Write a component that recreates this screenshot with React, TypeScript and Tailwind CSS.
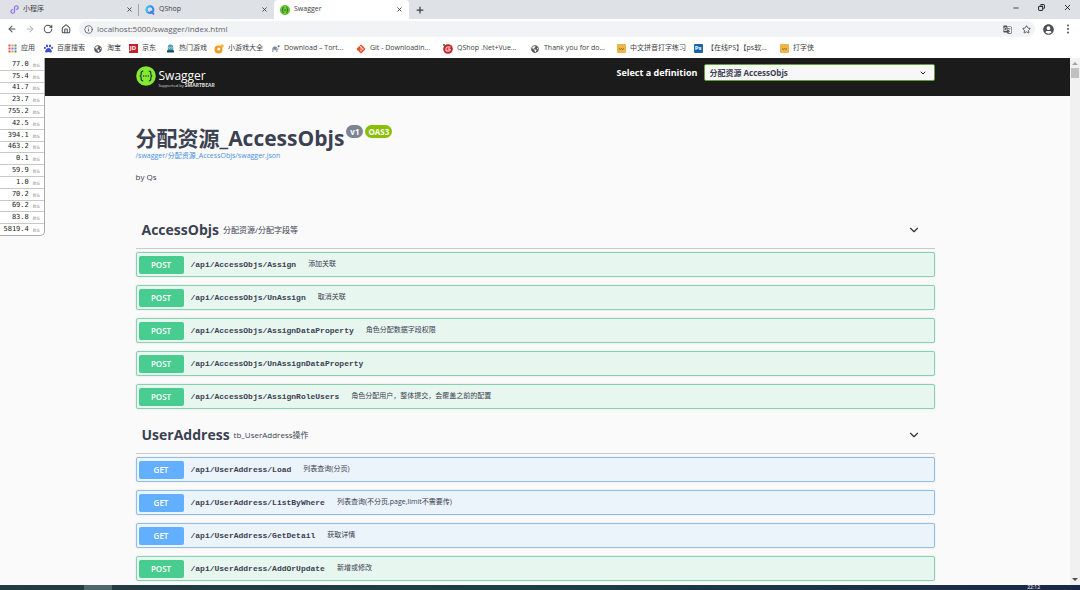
import React, { useState } from "react";
import {
  ArrowLeft,
  ArrowRight,
  ChevronDown,
  Copy,
  House,
  Info,
  Minus,
  Plus,
  RotateCw,
  Star,
  X,
} from "lucide-react";
import { FaGitAlt, FaGlobeAmericas, FaPaw, FaUserCircle } from "react-icons/fa";
import { MdGTranslate } from "react-icons/md";

type Method = "GET" | "POST";

type Operation = {
  method: Method;
  path: string;
  summary?: string;
};

type TagType = {
  name: string;
  description: string;
  operations: Operation[];
};

type BookmarkType = {
  title: string;
  width: string;
  icon: React.ReactNode;
};

const tags: TagType[] = [
  {
    name: "AccessObjs",
    description: "分配资源/分配字段等",
    operations: [
      { method: "POST", path: "/api/AccessObjs/Assign", summary: "添加关联" },
      { method: "POST", path: "/api/AccessObjs/UnAssign", summary: "取消关联" },
      {
        method: "POST",
        path: "/api/AccessObjs/AssignDataProperty",
        summary: "角色分配数据字段权限",
      },
      { method: "POST", path: "/api/AccessObjs/UnAssignDataProperty" },
      {
        method: "POST",
        path: "/api/AccessObjs/AssignRoleUsers",
        summary: "角色分配用户，整体提交，会覆盖之前的配置",
      },
    ],
  },
  {
    name: "UserAddress",
    description: "tb_UserAddress操作",
    operations: [
      { method: "GET", path: "/api/UserAddress/Load", summary: "列表查询(分页)" },
      {
        method: "GET",
        path: "/api/UserAddress/ListByWhere",
        summary: "列表查询(不分页,page,limit不需要传)",
      },
      { method: "GET", path: "/api/UserAddress/GetDetail", summary: "获取详情" },
      {
        method: "POST",
        path: "/api/UserAddress/AddOrUpdate",
        summary: "新增或修改",
      },
    ],
  },
];

const timings = [
  "77.0",
  "75.4",
  "41.7",
  "23.7",
  "755.2",
  "42.5",
  "394.1",
  "463.2",
  "0.1",
  "59.9",
  "1.0",
  "70.2",
  "69.2",
  "83.8",
  "5819.4",
];

const AppsIcon = () => (
  <svg viewBox="0 0 9 9" className="size-[9px]">
    {[0, 1, 2].map((row) =>
      ["#e0554a", "#d9a13b", "#5a8f5c"].map((color, col) => (
        <rect
          key={`${row}-${col}`}
          x={col * 3 + 0.5}
          y={row * 3 + 0.5}
          width="2"
          height="2"
          fill={row === 1 ? ["#d9534f", "#8a6fc0", "#4285f4"][col] : color}
        />
      ))
    )}
  </svg>
);

const JdIcon = () => (
  <span className="flex size-[9px] items-center justify-center bg-[#c8202b] text-[6px] font-bold text-white">
    JD
  </span>
);

const GameIcon = () => (
  <svg viewBox="0 0 10 10" className="size-[9px]">
    <path d="M2 4a3 3.500 0 0 1 6 0v4H2z" fill="#3f9fb4" />
    <rect x="1" y="7" width="8" height="2.500" rx="1" fill="#1f4e5c" />
    <circle cx="3.800" cy="4" r="1" fill="#fff" />
    <circle cx="6.200" cy="4" r="1" fill="#fff" />
    <circle cx="3.900" cy="4" r=".5" fill="#123" />
    <circle cx="6.100" cy="4" r=".5" fill="#123" />
  </svg>
);

const MiniGameIcon = () => (
  <svg viewBox="0 0 10 10" className="size-[10px]">
    <circle cx="4.500" cy="5.500" r="4" fill="#f39a1e" />
    <circle cx="4.800" cy="5" r="1.600" fill="#fff" />
    <circle cx="8" cy="2" r="1.700" fill="#f6b03c" />
  </svg>
);

const TortoiseIcon = () => (
  <svg viewBox="0 0 10 10" className="size-[9px]">
    <path d="M1 7c0-6 6-6 6.500-1L9 2.500 8 7z" fill="#a3a9b8" />
    <path d="M2 7v2M6.500 7v2M3 5l3-1M3.500 3.500l2 3" stroke="#626a80" strokeWidth=".9" />
    <circle cx="8.500" cy="2.500" r="1.200" fill="#6b7286" />
  </svg>
);

const GiteeIcon = () => (
  <svg viewBox="0 0 10 10" className="size-[10px]">
    <circle cx="5" cy="5" r="4.800" fill="#c71d23" />
    <path
      d="M7.500 3H4.200a1.200 1.200 0 0 0-1.200 1.200V7h3.200a1 1 0 0 0 1-1V5H4.700"
      fill="none"
      stroke="#fff"
      strokeWidth="1"
    />
    <rect x="0" y="0" width="2" height="2" fill="#4a9a4a" />
  </svg>
);

const TypingIcon = () => (
  <svg viewBox="0 0 9 9" className="size-[9px]">
    <rect width="9" height="9" rx="1" fill="#edb64a" />
    <path d="M2 4.500l1.300 1 1.200-1 1.200 1 1.300-1" fill="none" stroke="#8c5a14" strokeWidth=".9" />
  </svg>
);

const PsIcon = () => (
  <span className="flex size-[9px] items-center justify-center rounded-[1px] bg-[#1765a8] text-[6px] font-bold text-white">
    Ps
  </span>
);

const bookmarks: BookmarkType[] = [
  { title: "应用", width: "w-9", icon: <AppsIcon /> },
  { title: "百度搜索", width: "w-[50px]", icon: <FaPaw size={9} color="#3a4bd8" /> },
  { title: "淘宝", width: "w-[35px]", icon: <FaGlobeAmericas size={8} color="#55585c" /> },
  { title: "京东", width: "w-[37px]", icon: <JdIcon /> },
  { title: "热门游戏", width: "w-[49px]", icon: <GameIcon /> },
  { title: "小游戏大全", width: "w-14", icon: <MiniGameIcon /> },
  { title: "Download – Tort...", width: "w-[86px]", icon: <TortoiseIcon /> },
  { title: "Git - Downloadin...", width: "w-[87px]", icon: <FaGitAlt size={10} color="#e8502f" /> },
  { title: "QShop .Net+Vue...", width: "w-[87px]", icon: <GiteeIcon /> },
  { title: "Thank you for do...", width: "w-[86px]", icon: <FaGlobeAmericas size={8} color="#55585c" /> },
  { title: "中文拼音打字练习", width: "w-[77px]", icon: <TypingIcon /> },
  { title: "【在线PS】【ps软...", width: "w-[86px]", icon: <PsIcon /> },
  { title: "打字侠", width: "w-12", icon: <TypingIcon /> },
];

const MiniAppIcon = () => (
  <svg viewBox="0 0 10 10" className="size-[9px]" fill="none" strokeWidth="1.300" strokeLinecap="round">
    <path d="M5 7.200V2.800a2 2 0 1 1 2.400 2" stroke="#7a6cf0" />
    <path d="M5 2.800v4.400a2 2 0 1 1-2.400-2" stroke="#9a6ff0" />
  </svg>
);

const QShopIcon = () => (
  <svg viewBox="0 0 10 10" className="size-[10px]">
    <circle cx="5" cy="4.700" r="3.400" fill="none" stroke="#2f8ff0" strokeWidth="2" />
    <path d="M5 1.300a3.400 3.400 0 0 0-2.500 5.700" fill="none" stroke="#43c3e8" strokeWidth="2" />
    <path d="M5.500 6l3.500 3.500" stroke="#5a6ff0" strokeWidth="1.800" />
  </svg>
);

const SwaggerMark = ({ className }: { className: string }) => (
  <svg viewBox="0 0 20 20" className={className}>
    <circle cx="10" cy="10" r="9.800" fill="#85ea2d" />
    <path
      d="M7.200 5.200c-1.600 0-2 .6-2 1.800v1.300c0 1-.4 1.500-1.400 1.700 1 .2 1.400.7 1.400 1.700V13c0 1.200.4 1.800 2 1.800M12.800 5.200c1.600 0 2 .6 2 1.800v1.300c0 1 .4 1.500 1.400 1.700-1 .2-1.400.7-1.400 1.700V13c0 1.200-.4 1.800-2 1.800"
      fill="none"
      stroke="#173647"
      strokeWidth="1.200"
    />
    <circle cx="7.600" cy="10" r=".8" fill="#173647" />
    <circle cx="10" cy="10" r=".8" fill="#173647" />
    <circle cx="12.400" cy="10" r=".8" fill="#173647" />
  </svg>
);

// the small tab version, too tiny for the dots
const SwaggerFavicon = () => (
  <svg viewBox="0 0 20 20" className="size-[10px]">
    <circle cx="10" cy="10" r="9.500" fill="#6fd02c" stroke="#3f9a2a" strokeWidth="1" />
    <path
      d="M7.500 4.500c-2 0-2 1-2 2.500S5 9.700 3.500 10c1.500.3 2 1.500 2 3s0 2.500 2 2.500M12.500 4.500c2 0 2 1 2 2.500s.5 2.700 2 3c-1.500.3-2 1.500-2 3s0 2.500-2 2.500M7.500 10h5"
      fill="none"
      stroke="#1f5a2c"
      strokeWidth="1.800"
    />
  </svg>
);

const browserTabs = [
  { title: "小程序", icon: <MiniAppIcon /> },
  { title: "QShop", icon: <QShopIcon /> },
  { title: "Swagger", icon: <SwaggerFavicon /> },
];

function BrowserChrome() {
  const [activeTab, setActiveTab] = useState<number>(2);
  const [address, setAddress] = useState("localhost:5000/swagger/index.html");

  return (
    <header className="shrink-0 text-[#3c4043]">
      <div className="flex h-[19px] items-center bg-[#dee1e6] pl-1">
        {browserTabs.map((tab, index) => (
          <div
            key={tab.title}
            className={`flex h-full w-[135px] items-center pr-1.5 pl-1.5 ${
              activeTab === index ? "rounded-t-[4px] bg-white" : ""
            }`}
          >
            <button
              className="flex flex-1 items-center gap-1 text-[7px]"
              onClick={() => setActiveTab(index)}
            >
              {tab.icon}
              {tab.title}
            </button>
            <button aria-label={`关闭 ${tab.title}`}>
              <X size={7} strokeWidth={3} />
            </button>
            {index === 0 && <span className="-mr-1.5 ml-[5px] h-3 w-px bg-[#a3a6ab]" />}
          </div>
        ))}
        <button className="ml-1.5" aria-label="新标签页">
          <Plus size={10} strokeWidth={3} />
        </button>
        <div className="ml-auto flex items-center gap-[18px] pr-2 pb-1 text-black">
          <button aria-label="最小化">
            <Minus size={8} strokeWidth={2} />
          </button>
          <button aria-label="还原">
            <Copy size={7} strokeWidth={3} className="-scale-x-100" />
          </button>
          <button aria-label="关闭">
            <X size={9} strokeWidth={2} />
          </button>
        </div>
      </div>

      <div className="flex h-5 items-center bg-white pr-2 pl-[7px] text-[#4d5155]">
        <div className="flex items-center gap-2">
          <button aria-label="后退">
            <ArrowLeft size={10} strokeWidth={2.5} />
          </button>
          <button aria-label="前进" className="text-[#b5b8bb]">
            <ArrowRight size={10} strokeWidth={2.5} />
          </button>
          <button aria-label="重新加载">
            <RotateCw size={10} strokeWidth={2.5} />
          </button>
          <button aria-label="主页">
            <House size={10} strokeWidth={2.5} />
          </button>
        </div>
        <div className="ml-2 flex h-4 flex-1 items-center gap-1 rounded-full bg-[#f1f3f4] pr-1 pl-[5px]">
          <Info size={9} strokeWidth={2} />
          <input
            aria-label="地址栏"
            className="min-w-0 flex-1 bg-transparent text-[8px] text-[#5f6368] outline-none"
            value={address}
            onChange={(event) => setAddress(event.target.value)}
          />
          <button aria-label="翻译" className="mr-1.5">
            <MdGTranslate size={9} />
          </button>
          <button aria-label="收藏">
            <Star size={9} strokeWidth={2.5} />
          </button>
        </div>
        <button aria-label="用户" className="ml-2">
          <FaUserCircle size={11} />
        </button>
        <button aria-label="菜单" className="ml-2.5">
          <svg viewBox="0 0 8 10" className="h-2.5 w-2 fill-[#4d5155]">
            <circle cx="4" cy="1.500" r="1" />
            <circle cx="4" cy="5" r="1" />
            <circle cx="4" cy="8.500" r="1" />
          </svg>
        </button>
      </div>

      <nav className="flex h-[19px] items-center overflow-hidden bg-white pl-[7px]">
        {bookmarks.map((bookmark) => (
          <a
            key={bookmark.title}
            href="#"
            className={`flex shrink-0 items-center gap-1 text-[7px] whitespace-nowrap ${bookmark.width}`}
          >
            <span className="flex w-2.5 shrink-0 justify-center">{bookmark.icon}</span>
            {bookmark.title}
          </a>
        ))}
      </nav>
    </header>
  );
}

function TopBar() {
  return (
    <div className="h-[38px] bg-[#1b1b1b]">
      <div className="mx-auto flex max-w-[799px] items-start justify-between pt-1.5">
        <a href="#" className="flex items-start gap-[3px] pt-0.5 text-white">
          <SwaggerMark className="size-5" />
          <span className="flex flex-col pt-1">
            <span className="text-[12px] leading-3">Swagger</span>
            <span className="text-[4px] leading-[7px] whitespace-nowrap text-[#dddddd]">
              Supported by <b className="text-[5px]">SMARTBEAR</b>
            </span>
          </span>
        </a>
        <div className="flex items-center gap-1.5">
          <label htmlFor="definition" className="text-[9px] font-bold text-white">
            Select a definition
          </label>
          <div className="relative">
            <select
              id="definition"
              className="block h-[17px] w-[231px] appearance-none rounded-[2px] border border-[#62a03f] bg-[#f7f7f7] px-[5px] text-[8px] font-bold text-[#3b4151] outline-none"
            >
              <option>分配资源 AccessObjs</option>
              <option>UserAddress</option>
            </select>
            <ChevronDown
              size={8}
              strokeWidth={3}
              className="pointer-events-none absolute top-[5px] right-2 text-[#222222]"
            />
          </div>
        </div>
      </div>
    </div>
  );
}

function OperationRow({ operation }: { operation: Operation }) {
  const isGet = operation.method === "GET";

  return (
    <button
      className={`flex h-[25px] w-full items-center rounded-[2px] border px-0.5 text-left shadow-[0_0_2px_rgba(0,0,0,0.12)] ${
        isGet ? "border-[#8fbfe6] bg-[#ebf3fb]" : "border-[#84d3ae] bg-[#e8f6f0]"
      }`}
    >
      <span
        className={`flex h-[18px] w-[45px] items-center justify-center rounded-[2px] text-[8px] font-semibold text-white ${
          isGet ? "bg-[#61affe]" : "bg-[#49cc90]"
        }`}
      >
        {operation.method}
      </span>
      <span className="ml-[7px] font-['Liberation_Mono',monospace] text-[8px] font-bold text-[#3b4151]">
        {operation.path}
      </span>
      <span className="ml-3 text-[7px] text-[#3b4151]">{operation.summary}</span>
    </button>
  );
}

function TagSection({ tag }: { tag: TagType }) {
  const [open, setOpen] = useState(true);

  return (
    <section className="mb-[7px]">
      <button
        className="mb-[3px] flex h-[38px] w-full items-center border-b border-[#3b4151]/25 pr-3.5 pl-1.5 text-[#3b4151]"
        onClick={() => setOpen(!open)}
      >
        <h3 className="text-[14px] font-bold">{tag.name}</h3>
        <small className="ml-1 text-[8px]">{tag.description}</small>
        <ChevronDown size={14} strokeWidth={2} className="ml-auto text-[#333333]" />
      </button>
      {open && (
        <div className="flex flex-col gap-2">
          {tag.operations.map((operation) => (
            <OperationRow key={operation.path} operation={operation} />
          ))}
        </div>
      )}
    </section>
  );
}

function ProfilerResults() {
  return (
    <ul className="absolute top-0 left-0 flex h-[178px] w-[45px] flex-col overflow-hidden rounded-br-[5px] border-r border-b border-[#aaaaaa] bg-white pt-px font-['DejaVu_Sans_Mono',monospace] text-[7px] leading-[9px]">
      {timings.map((time) => (
        <li
          key={time}
          className="flex flex-1 items-center justify-end gap-1 border-b border-[#c8c8c8] pr-1 text-[#222222] last:border-b-0"
        >
          {time}
          <span className="text-[6px] text-[#999999]">ms</span>
        </li>
      ))}
    </ul>
  );
}

function Scrollbar() {
  return (
    <div className="flex w-2.5 shrink-0 flex-col items-center bg-[#f1f1f1] py-[3px]">
      <svg viewBox="0 0 6 4" className="h-1 w-1.5 fill-[#a3a3a3]">
        <path d="M0 4l3-3 3 3z" />
      </svg>
      <div className="mt-[3px] h-2.5 w-2 bg-[#c1c1c1]" />
      <svg viewBox="0 0 6 4" className="mt-auto h-1 w-1.5 fill-[#505050]">
        <path d="M0 0l3 3 3-3z" />
      </svg>
    </div>
  );
}

export default function App() {
  return (
    <div className="flex h-screen flex-col overflow-hidden bg-[#fafafa] font-['Open_Sans','Noto_Sans_CJK_SC',sans-serif]">
      <BrowserChrome />
      <div className="flex min-h-0 flex-1">
        <main className="relative min-w-0 flex-1 overflow-hidden">
          <TopBar />
          <ProfilerResults />
          <div className="mx-auto max-w-[799px] pt-7 text-[#3b4151]">
            <div className="flex items-start gap-[2px]">
              <h2 className="text-[21px] leading-7 font-bold">分配资源_AccessObjs</h2>
              <span className="mt-[1px] rounded-full bg-[#7d8492] px-1 text-[8px] leading-[13px] font-bold text-white">
                v1
              </span>
              <span className="mt-[1px] rounded-full bg-[#89bf04] px-[3px] text-[8px] leading-[13px] font-bold text-white">
                OAS3
              </span>
            </div>
            <a href="#" className="block text-[7px] leading-2 text-[#4990e2]">
              /swagger/分配资源_AccessObjs/swagger.json
            </a>
            <p className="mt-[11px] mb-7 text-[8px] leading-3">by Qs</p>
            {tags.map((tag) => (
              <TagSection key={tag.name} tag={tag} />
            ))}
          </div>
        </main>
        <Scrollbar />
      </div>
      <footer className="flex h-[5px] shrink-0 bg-linear-to-r from-[#243a42] via-[#1b4044] to-[#1b2747] pl-[84px]">
        <div className="h-full w-7 bg-[#50676a]" />
        <span className="mr-10 ml-auto text-[5px] leading-[5px] text-white">22:12</span>
      </footer>
    </div>
  );
}
